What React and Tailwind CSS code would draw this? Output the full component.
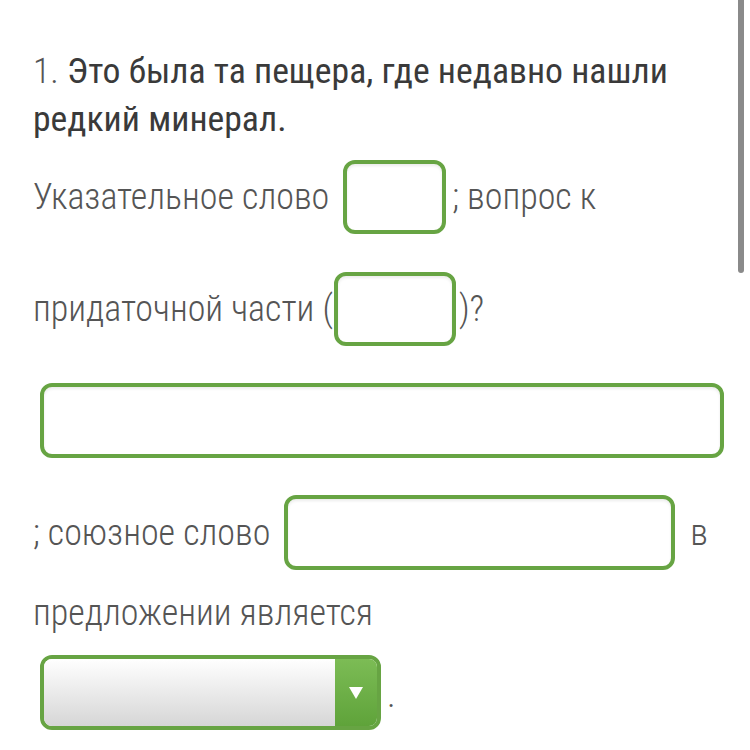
export default function App() {
  const box = "box-border border-[4px] border-[#67a443] rounded-[12px] bg-white shadow-[inset_0_2px_3px_rgba(0,0,0,0.08)]";
  return (
    <div className="relative w-[750px] h-[750px] bg-white overflow-hidden text-[#555]" style={{ fontFamily: '"Roboto Condensed", Roboto, sans-serif' }}>
      <div className="absolute right-[6px] top-0 w-[6px] h-[273px] bg-[#8a8a8a] rounded-b-[3px]" />
      <div className="pl-[33px] pt-[47px]">
        <div className="text-[35.7px] leading-[48px] text-[#3a3a3a] font-normal w-[690px]">
          <span className="font-light text-[#555]">1.</span> Это была та пещера, где недавно нашли редкий минерал.
        </div>
        <div className="text-[36px] font-light">
          <div className="flex items-center h-[74px] mt-[17px]">
            <span>Указательное слово</span>
            <div className={`${box} w-[103px] h-[74px] ml-[14px]`} />
            <span className="ml-[6px]">; вопрос к</span>
          </div>
          <div className="flex items-center h-[74px] mt-[38px]">
            <span>придаточной части (</span>
            <div className={`${box} w-[122px] h-[74px] ml-[1px]`} />
            <span className="ml-[3px]">)?</span>
          </div>
          <div className={`${box} w-[684px] h-[75px] mt-[37px] ml-[7px]`} />
          <div className="flex items-center h-[75px] mt-[37px]">
            <span>; союзное слово</span>
            <div className={`${box} w-[391px] h-[75px] ml-[14px]`} />
            <span className="ml-[15px]">в</span>
          </div>
          <div className="leading-[48px] mt-[19px]">предложении является</div>
          <div className="flex items-center mt-[18px] ml-[7px]">
            <div className="box-border flex w-[341px] h-[75px] border-[4px] border-[#67a443] rounded-[12px] overflow-hidden">
              <div className="flex-1 bg-gradient-to-b from-white to-[#d6d6d6]" />
              <div className="w-[42px] flex items-center justify-center bg-gradient-to-b from-[#7cbc55] to-[#5fa33a]">
                <svg width="14" height="12" viewBox="0 0 14 12"><path d="M0 0 L14 0 L7 12 Z" fill="#fff" /></svg>
              </div>
            </div>
            <span className="ml-[6px] mt-[4px] text-[36px]">.</span>
          </div>
        </div>
      </div>
    </div>
  );
}
